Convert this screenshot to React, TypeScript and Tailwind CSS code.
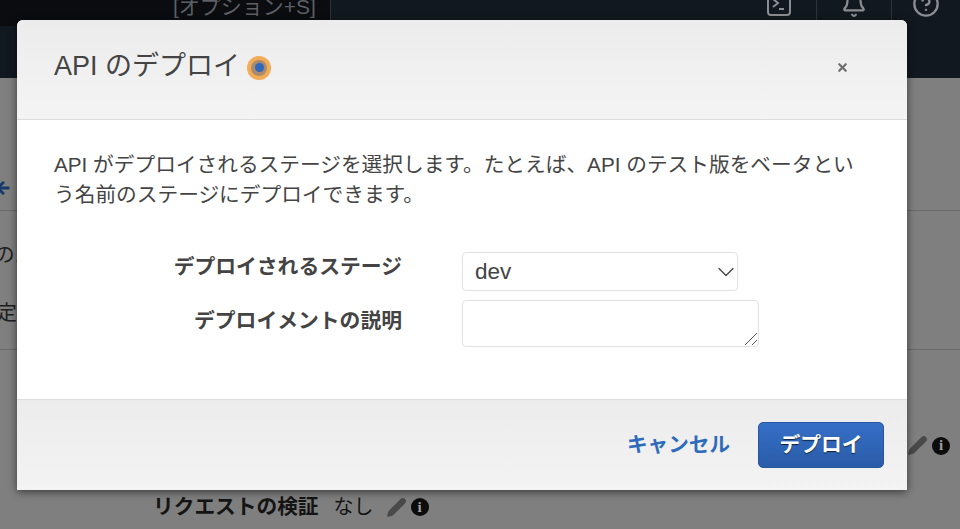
import { ChevronDown, Pencil, Bell, CircleHelp, X, ArrowLeft } from 'lucide-react';

const font = { jp: "font-['Liberation_Sans','Noto_Sans_CJK_JP',sans-serif]" };

function RowIcons() {
  return (
    <div className="flex items-center gap-[4px]">
      <Pencil className="w-[21px] h-[21px] text-[#4a4a4a]" fill="#4a4a4a" strokeWidth={1.5} />
      <span className="flex items-center justify-center w-[18px] h-[18px] rounded-full bg-[#0c0c0c] text-[#a0a0a0] text-[15px] font-bold font-['Liberation_Serif',serif]">
        i
      </span>
    </div>
  );
}

function TopBar() {
  return (
    <header className="h-[78px] bg-[#12181f] shrink-0">
      <div className="h-[26px] flex">
        <div className="w-[331px] h-full bg-[#0a0c10] border-r border-[#2f343a] overflow-hidden pl-[173px]">
          <span className="block -mt-[6px] text-[21px] leading-[26px] text-[#5c5f63] whitespace-nowrap">
            [オプション+S]
          </span>
        </div>
        <div className="flex-1 flex justify-end items-start overflow-hidden">
          <div className="w-[75px] h-[20px] flex justify-center overflow-hidden border-r border-[#2f343a]">
            <svg viewBox="0 0 24 24" className="w-[24px] h-[24px] -mt-[8px] text-[#8b8d90]" fill="none" stroke="currentColor" strokeWidth={2}>
              <rect x="1" y="1" width="22" height="22" rx="3" />
              <path d="M6 7l5 4-5 4M12 17h5" />
            </svg>
          </div>
          <div className="w-[75px] h-[20px] flex justify-center overflow-hidden border-r border-[#2f343a]">
            <Bell className="w-[26px] h-[26px] -mt-[8px] text-[#8b8d90]" strokeWidth={2} />
          </div>
          <div className="w-[68px] h-[20px] flex justify-center overflow-hidden">
            <CircleHelp className="w-[28px] h-[28px] -mt-[10px] text-[#8b8d90]" strokeWidth={2} />
          </div>
        </div>
      </div>
    </header>
  );
}

function Backdrop() {
  return (
    <div className="flex flex-col h-full">
      <TopBar />
      <div className="h-[133px] border-b border-[#6a6a6a] flex items-end pb-[12px] text-[#17396b]">
        <ArrowLeft className="w-[18px] h-[18px] -ml-[6px] mb-[1px]" strokeWidth={4} />
      </div>
      <div className="h-[139px] border-b border-[#6a6a6a] text-[#202020] text-[20.7px] leading-[24px] pt-[32px]">
        <div className="-ml-[6px] whitespace-nowrap">の.</div>
        <div className="w-[17px] mt-[34px] flex justify-end whitespace-nowrap">定</div>
      </div>
      <div className="h-[106px] flex justify-end items-end pr-[10px]">
        <RowIcons />
      </div>
      <div className="flex items-center pl-[153px] mt-[38px] text-[20.7px] leading-[26px] text-[#141414]">
        <span className="font-bold">リクエストの検証</span>
        <span className="ml-[15px] mr-[12px] text-[20px]">なし</span>
        <RowIcons />
      </div>
    </div>
  );
}

export default function App() {
  return (
    <div className={`relative w-[960px] h-[529px] overflow-hidden bg-[#7f7f7f] ${font.jp}`}>
      <Backdrop />

      {/* Modal */}
      <div className="absolute left-[17px] top-[20px] w-[890px] h-[470px] flex flex-col rounded-t-[6px] rounded-b-[2px] bg-white shadow-[0_2px_8px_rgba(0,0,0,0.55)]">
        <div className="h-[100px] shrink-0 flex items-center justify-between pl-[37px] pr-[58px] pb-[4px] rounded-t-[6px] border-b border-[#dcdcdc] bg-gradient-to-b from-[#ececec] to-[#f4f4f4]">
          <div className="flex items-center gap-[7px]">
            <h1 className="text-[27px] leading-[32px] -mt-[3px] text-[#444]">API のデプロイ</h1>
            <span className="flex items-center justify-center w-[24px] h-[24px] rounded-full bg-[#f2ab57]">
              <span className="flex items-center justify-center w-[16px] h-[16px] rounded-full bg-[#a98a6e]">
                <span className="w-[9px] h-[9px] rounded-full bg-[#2f68b8]" />
              </span>
            </span>
          </div>
          <X className="w-[13px] h-[13px] text-[#6e6e6e]" strokeWidth={4} />
        </div>

        <div className="flex-1 px-[37px] pt-[30px]">
          <p className="text-[20.7px] leading-[30px] text-[#444] w-[810px]">
            API がデプロイされるステージを選択します。たとえば、API のテスト版をベータという名前のステージにデプロイできます。
          </p>
          <div className="flex mt-[42px]">
            <div className="w-[348px] text-right font-bold text-[20.8px] text-[#444]">
              <div className="h-[39px] leading-[30px] whitespace-nowrap">デプロイされるステージ</div>
              <div className="mt-[18px] leading-[24px] whitespace-nowrap">デプロイメントの説明</div>
            </div>
            <div className="ml-[60px] flex flex-col gap-[9px]">
              <div className="w-[276px] h-[39px] flex items-center justify-between pl-[12px] pr-0 border border-[#e2e2e2] rounded-[4px] text-[22.5px] text-[#444] bg-white">
                dev
                <ChevronDown className="w-[28px] h-[28px] -mr-[3px] text-[#444]" strokeWidth={1.2} />
              </div>
              <div className="relative w-[297px] h-[47px]">
                <textarea className="block w-full h-full resize-none border border-[#e2e2e2] rounded-[4px] bg-white" />
                <svg viewBox="0 0 14 14" className="absolute right-[1px] bottom-[1px] w-[14px] h-[14px]" fill="none" stroke="#555" strokeWidth={1}>
                  <path d="M1 13L13 1M8 13l5-5" />
                </svg>
              </div>
            </div>
          </div>
        </div>

        <div className="h-[91px] shrink-0 flex items-center justify-end gap-[28px] pr-[23px] border-t border-[#dedede] bg-gradient-to-b from-[#ececec] to-[#f3f3f3]">
          <span className="text-[20.6px] font-bold text-[#2f6bbd]">キャンセル</span>
          <button className="w-[126px] h-[46px] rounded-[5px] border border-[#28569c] bg-gradient-to-b from-[#356fc7] to-[#2a5ca8] text-white text-[20.8px] font-bold [text-shadow:0_1px_1px_rgba(0,0,0,0.7)]">
            デプロイ
          </button>
        </div>
      </div>
    </div>
  );
}
